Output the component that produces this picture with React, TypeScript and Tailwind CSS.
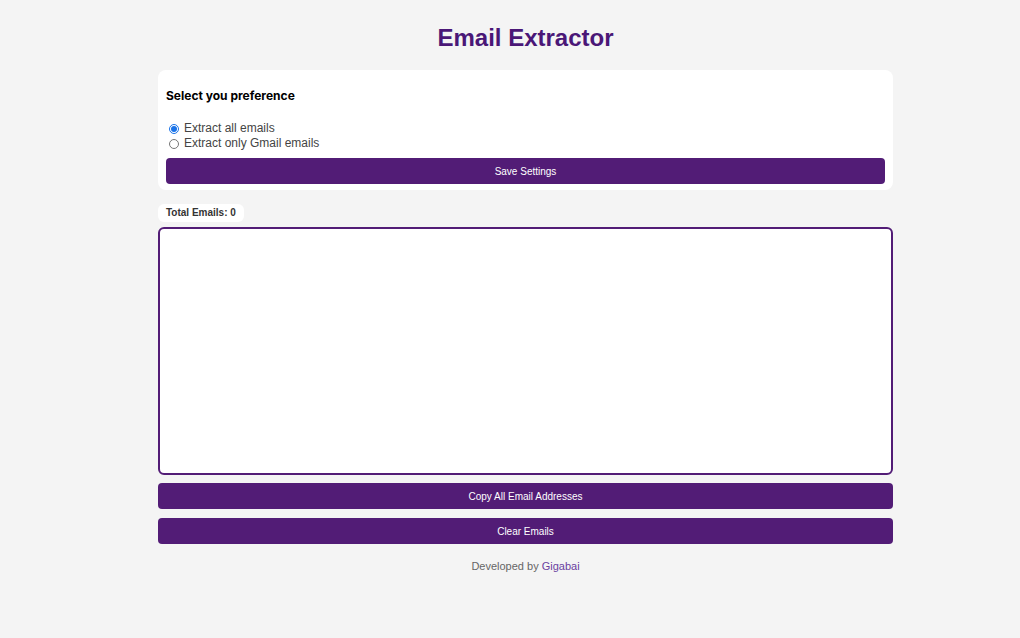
import { useState } from 'react';

export default function App() {
  const [mode, setMode] = useState('all');
  const [emails, setEmails] = useState('');

  const count = emails.split(/\s+/).filter(Boolean).length;

  return (
    <div className="min-h-screen bg-[#f4f4f4] font-['Liberation_Sans',Arial,sans-serif]">
      <div className="ml-[158px] w-[735px] pt-[22px]">
        <h1 className="text-center text-[24px] font-bold leading-[32px] text-[#4a1777]">Email Extractor</h1>

        {/* Settings */}
        <div className="mt-[16px] rounded-lg bg-white px-2 pt-[19px] pb-1.5">
          <h2 className="text-[12px] font-bold leading-[14px] text-black font-['Inter',sans-serif]">
            Select you preference
          </h2>
          <div className="mt-[18px] pl-[3px] text-[12px] leading-[15px] text-[#444]">
            <label className="flex items-center gap-[5px]">
              <input
                type="radio"
                name="mode"
                checked={mode === 'all'}
                onChange={() => setMode('all')}
                className="m-0 h-[10px] w-[10px] accent-[#1a73e8]"
              />
              <span>Extract all emails</span>
            </label>
            <label className="flex items-center gap-[5px]">
              <input
                type="radio"
                name="mode"
                checked={mode === 'gmail'}
                onChange={() => setMode('gmail')}
                className="m-0 h-[10px] w-[10px]"
              />
              <span>Extract only Gmail emails</span>
            </label>
          </div>
          <button className="mt-[7px] h-[26px] w-full rounded bg-[#521c76] text-[10px] text-white">
            Save Settings
          </button>
        </div>

        {/* Results */}
        <div className="mt-[14px] w-fit rounded-md bg-white px-2 py-[3px] text-[10px] font-bold leading-[12px] text-[#333]">
          Total Emails: {count}
        </div>
        <textarea
          value={emails}
          onChange={(e) => setEmails(e.target.value)}
          className="mt-[5px] block h-[248px] w-full resize-none rounded-md border-2 border-[#521c76] bg-white p-2 text-[12px] outline-none"
        />

        <button className="mt-[8px] h-[26px] w-full rounded bg-[#521c76] text-[10px] text-white">
          Copy All Email Addresses
        </button>
        <button
          onClick={() => setEmails('')}
          className="mt-[9px] h-[26px] w-full rounded bg-[#521c76] text-[10px] text-white"
        >
          Clear Emails
        </button>

        <p className="mt-[15px] text-center text-[11px] leading-[14px] text-[#666]">
          Developed by <span className="text-[#6b3fa0]">Gigabai</span>
        </p>
      </div>
    </div>
  );
}
